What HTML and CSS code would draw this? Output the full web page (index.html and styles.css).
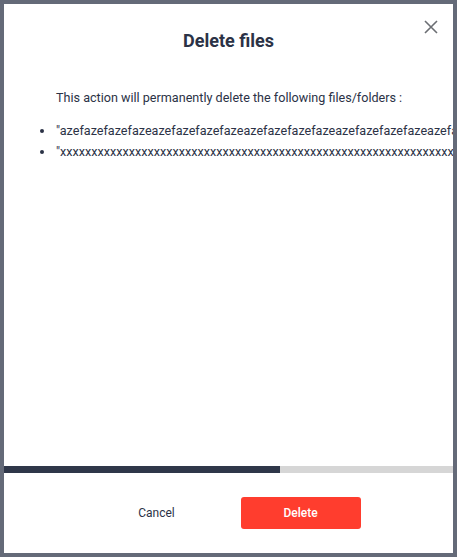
FILE: index.html
```html
<!DOCTYPE html>
<html lang="en">
<head>
<meta charset="utf-8">
<title>Delete files</title>
<link rel="stylesheet" href="styles.css">
</head>
<body>
<div class="dialog">
  <button class="close" aria-label="Close">
    <svg width="14" height="14" viewBox="0 0 14 14"><path d="M1 1L13 13M13 1L1 13" stroke="#6b6e73" stroke-width="1.6" fill="none"/></svg>
  </button>
  <h1 class="title">Delete files</h1>
  <div class="content">
    <p class="intro">This action will permanently delete the following files/folders :</p>
    <ul class="files">
      <li>"azefazefazefazeazefazefazefazeazefazefazefazeazefazefazefazeazefazefazefazeazefazefazefaze"</li>
      <li>"xxxxxxxxxxxxxxxxxxxxxxxxxxxxxxxxxxxxxxxxxxxxxxxxxxxxxxxxxxxxxxxxxxxxxxxxxxxxxxxxxxxxxxxxx"</li>
    </ul>
  </div>
  <div class="progress"><div class="progress-fill" style="width: 61.5%"></div></div>
  <div class="footer">
    <button class="btn btn-cancel">Cancel</button>
    <button class="btn btn-delete">Delete</button>
  </div>
</div>
</body>
</html>
```

FILE: styles.css
```css
html, body {
  margin: 0;
  padding: 0;
  height: 100%;
}
body {
  background: #646a78;
  padding: 4px;
  box-sizing: border-box;
  font-family: Roboto, "Liberation Sans", sans-serif;
  color: #2b3246;
}
.dialog {
  position: relative;
  background: #ffffff;
  width: 449px;
  height: 549px;
  display: flex;
  flex-direction: column;
  overflow: hidden;
}
.close {
  position: absolute;
  top: 11px;
  right: 10px;
  width: 24px;
  height: 24px;
  padding: 0;
  border: none;
  background: transparent;
  display: flex;
  align-items: center;
  justify-content: center;
}
.title {
  margin: 25px 0 0;
  text-align: center;
  font-size: 18px;
  font-weight: 700;
  line-height: 24px;
  color: #2b3246;
}
.content {
  flex: 1;
  padding: 0 0 0 52px;
}
.intro {
  margin: 37px 0 0;
  font-size: 12.6px;
  line-height: 16px;
  white-space: nowrap;
}
.files {
  margin: 14px 0 0;
  padding: 0;
  list-style: none;
  font-size: 12.6px;
  line-height: 21px;
}
.files li {
  position: relative;
  white-space: nowrap;
}
.files li::before {
  content: "";
  position: absolute;
  left: -16px;
  top: 9px;
  width: 4px;
  height: 4px;
  border-radius: 50%;
  background: #2b3246;
}
.progress {
  height: 7px;
  background: #d6d6d6;
}
.progress-fill {
  height: 100%;
  background: #2f3749;
}
.footer {
  height: 80px;
  display: flex;
  justify-content: center;
  align-items: center;
  gap: 24px;
}
.btn {
  width: 120px;
  height: 32px;
  border: none;
  border-radius: 3px;
  font-family: Roboto, "Liberation Sans", sans-serif;
  font-size: 12px;
  cursor: pointer;
}
.btn-cancel {
  background: transparent;
  color: #2b3246;
}
.btn-delete {
  background: #ff3d2e;
  color: #ffffff;
  font-weight: 500;
}
```
